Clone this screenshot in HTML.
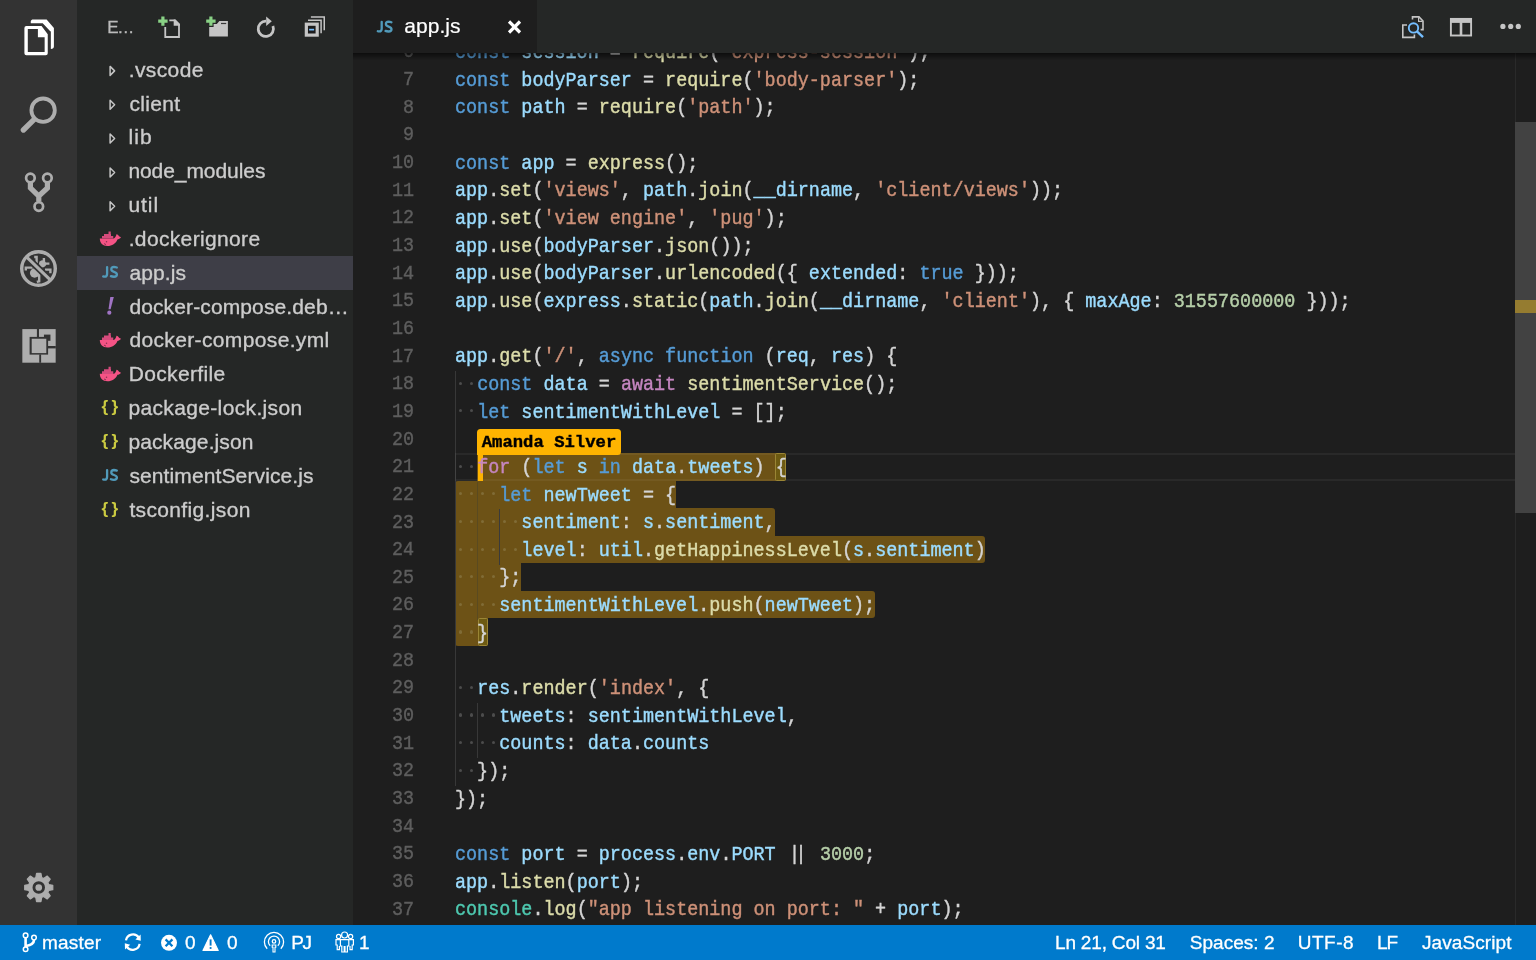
<!DOCTYPE html>
<html><head><meta charset="utf-8"><title>app.js</title>
<style>
*{margin:0;padding:0;box-sizing:border-box}
html,body{width:1536px;height:960px;overflow:hidden;background:#1e1e1e;font-family:"Liberation Sans",sans-serif}
#root{position:absolute;left:0;top:0;width:1536px;height:960px;overflow:hidden;will-change:transform}
#act{position:absolute;left:0;top:0;width:77px;height:925px;background:#333333}
#side{position:absolute;left:77px;top:0;width:276px;height:925px;background:#252726;overflow:hidden}
#tabs{position:absolute;left:353px;top:0;width:1183px;height:53px;background:#252726}
#tab{position:absolute;left:0;top:0;width:184px;height:53px;background:#1e1e1e}
#ed{position:absolute;left:0;top:0;width:1536px;height:925px;overflow:hidden}
#status{position:absolute;left:0;top:925px;width:1536px;height:35px;background:#007acc;color:#fff;font-size:19px}
#status span{position:absolute;top:0;line-height:35px;white-space:nowrap;-webkit-text-stroke:0.3px}
.row{position:absolute;left:0;width:276px;height:33.84px;line-height:33.84px;font-size:21px;color:#cccccc;white-space:nowrap}
.row span{position:absolute;left:52px;top:-0.3px;-webkit-text-stroke:0.35px}
.row svg{position:absolute}
.ln{position:absolute;left:353px;width:61px;transform:scaleY(1.1);transform-origin:0 46%;text-align:right;color:#5e5e5e;-webkit-text-stroke:0.35px;font:18.430px/27.65px "Liberation Mono",monospace;height:27.65px}
.cl{position:absolute;left:455px;color:#d4d4d4;transform:scaleY(1.06);transform-origin:0 50%;-webkit-text-stroke:0.4px;font:18.430px/27.65px "Liberation Mono",monospace;height:27.65px;white-space:pre}
.sel{position:absolute;background:#6d5216}
.lbl{position:absolute;background:#ffb400;border-radius:3.5px 3.5px 3.5px 0;color:#000;font:bold 17.25px/28px "Liberation Mono",monospace;-webkit-text-stroke:0.4px;text-align:center;white-space:pre}
svg{display:block;overflow:visible}
</style></head><body>
<div id="root">
<div id="ed">
<div class="sel" style="left:477.12px;top:453.33px;width:309.08px;height:27.67px;border-radius:0px 3px 3px 0px"></div>
<div class="sel" style="left:455.00px;top:480.80px;width:220.60px;height:27.67px;border-radius:3px 0px 0px 0px"></div>
<div class="sel" style="left:455.00px;top:508.27px;width:320.14px;height:27.67px;border-radius:0px 3px 0px 0px"></div>
<div class="sel" style="left:455.00px;top:535.74px;width:530.28px;height:27.67px;border-radius:0px 3px 3px 0px"></div>
<div class="sel" style="left:455.00px;top:563.21px;width:65.76px;height:27.67px;border-radius:0px 0px 0px 0px"></div>
<div class="sel" style="left:455.00px;top:590.68px;width:419.68px;height:27.67px;border-radius:0px 3px 3px 0px"></div>
<div class="sel" style="left:455.00px;top:618.15px;width:32.58px;height:27.67px;border-radius:0px 0px 3px 3px"></div>
<div style="position:absolute;left:455.00px;top:371.05px;width:1.2px;height:414.75px;background:#383838"></div>
<div style="position:absolute;left:477.12px;top:481.65px;width:1.2px;height:138.25px;background:#5a4a20"></div>
<div style="position:absolute;left:499.24px;top:509.30px;width:1.2px;height:55.30px;background:#3a3a3a"></div>
<div style="position:absolute;left:477.12px;top:702.85px;width:1.2px;height:55.30px;background:#383838"></div>
<div style="position:absolute;left:458.93px;top:381.62px;width:3.2px;height:3.2px;border-radius:50%;background:#4c4c4c"></div>
<div style="position:absolute;left:469.99px;top:381.62px;width:3.2px;height:3.2px;border-radius:50%;background:#4c4c4c"></div>
<div style="position:absolute;left:458.93px;top:409.27px;width:3.2px;height:3.2px;border-radius:50%;background:#4c4c4c"></div>
<div style="position:absolute;left:469.99px;top:409.27px;width:3.2px;height:3.2px;border-radius:50%;background:#4c4c4c"></div>
<div style="position:absolute;left:458.93px;top:464.57px;width:3.2px;height:3.2px;border-radius:50%;background:#4c4c4c"></div>
<div style="position:absolute;left:469.99px;top:464.57px;width:3.2px;height:3.2px;border-radius:50%;background:#4c4c4c"></div>
<div style="position:absolute;left:458.93px;top:492.22px;width:3.2px;height:3.2px;border-radius:50%;background:#806c36"></div>
<div style="position:absolute;left:469.99px;top:492.22px;width:3.2px;height:3.2px;border-radius:50%;background:#806c36"></div>
<div style="position:absolute;left:481.05px;top:492.22px;width:3.2px;height:3.2px;border-radius:50%;background:#806c36"></div>
<div style="position:absolute;left:492.11px;top:492.22px;width:3.2px;height:3.2px;border-radius:50%;background:#806c36"></div>
<div style="position:absolute;left:458.93px;top:519.88px;width:3.2px;height:3.2px;border-radius:50%;background:#806c36"></div>
<div style="position:absolute;left:469.99px;top:519.88px;width:3.2px;height:3.2px;border-radius:50%;background:#806c36"></div>
<div style="position:absolute;left:481.05px;top:519.88px;width:3.2px;height:3.2px;border-radius:50%;background:#806c36"></div>
<div style="position:absolute;left:492.11px;top:519.88px;width:3.2px;height:3.2px;border-radius:50%;background:#806c36"></div>
<div style="position:absolute;left:503.17px;top:519.88px;width:3.2px;height:3.2px;border-radius:50%;background:#806c36"></div>
<div style="position:absolute;left:514.23px;top:519.88px;width:3.2px;height:3.2px;border-radius:50%;background:#806c36"></div>
<div style="position:absolute;left:458.93px;top:547.52px;width:3.2px;height:3.2px;border-radius:50%;background:#806c36"></div>
<div style="position:absolute;left:469.99px;top:547.52px;width:3.2px;height:3.2px;border-radius:50%;background:#806c36"></div>
<div style="position:absolute;left:481.05px;top:547.52px;width:3.2px;height:3.2px;border-radius:50%;background:#806c36"></div>
<div style="position:absolute;left:492.11px;top:547.52px;width:3.2px;height:3.2px;border-radius:50%;background:#806c36"></div>
<div style="position:absolute;left:503.17px;top:547.52px;width:3.2px;height:3.2px;border-radius:50%;background:#806c36"></div>
<div style="position:absolute;left:514.23px;top:547.52px;width:3.2px;height:3.2px;border-radius:50%;background:#806c36"></div>
<div style="position:absolute;left:458.93px;top:575.18px;width:3.2px;height:3.2px;border-radius:50%;background:#806c36"></div>
<div style="position:absolute;left:469.99px;top:575.18px;width:3.2px;height:3.2px;border-radius:50%;background:#806c36"></div>
<div style="position:absolute;left:481.05px;top:575.18px;width:3.2px;height:3.2px;border-radius:50%;background:#806c36"></div>
<div style="position:absolute;left:492.11px;top:575.18px;width:3.2px;height:3.2px;border-radius:50%;background:#806c36"></div>
<div style="position:absolute;left:458.93px;top:602.83px;width:3.2px;height:3.2px;border-radius:50%;background:#806c36"></div>
<div style="position:absolute;left:469.99px;top:602.83px;width:3.2px;height:3.2px;border-radius:50%;background:#806c36"></div>
<div style="position:absolute;left:481.05px;top:602.83px;width:3.2px;height:3.2px;border-radius:50%;background:#806c36"></div>
<div style="position:absolute;left:492.11px;top:602.83px;width:3.2px;height:3.2px;border-radius:50%;background:#806c36"></div>
<div style="position:absolute;left:458.93px;top:630.48px;width:3.2px;height:3.2px;border-radius:50%;background:#806c36"></div>
<div style="position:absolute;left:469.99px;top:630.48px;width:3.2px;height:3.2px;border-radius:50%;background:#806c36"></div>
<div style="position:absolute;left:458.93px;top:685.77px;width:3.2px;height:3.2px;border-radius:50%;background:#4c4c4c"></div>
<div style="position:absolute;left:469.99px;top:685.77px;width:3.2px;height:3.2px;border-radius:50%;background:#4c4c4c"></div>
<div style="position:absolute;left:458.93px;top:713.42px;width:3.2px;height:3.2px;border-radius:50%;background:#4c4c4c"></div>
<div style="position:absolute;left:469.99px;top:713.42px;width:3.2px;height:3.2px;border-radius:50%;background:#4c4c4c"></div>
<div style="position:absolute;left:481.05px;top:713.42px;width:3.2px;height:3.2px;border-radius:50%;background:#4c4c4c"></div>
<div style="position:absolute;left:492.11px;top:713.42px;width:3.2px;height:3.2px;border-radius:50%;background:#4c4c4c"></div>
<div style="position:absolute;left:458.93px;top:741.07px;width:3.2px;height:3.2px;border-radius:50%;background:#4c4c4c"></div>
<div style="position:absolute;left:469.99px;top:741.07px;width:3.2px;height:3.2px;border-radius:50%;background:#4c4c4c"></div>
<div style="position:absolute;left:481.05px;top:741.07px;width:3.2px;height:3.2px;border-radius:50%;background:#4c4c4c"></div>
<div style="position:absolute;left:492.11px;top:741.07px;width:3.2px;height:3.2px;border-radius:50%;background:#4c4c4c"></div>
<div style="position:absolute;left:458.93px;top:768.73px;width:3.2px;height:3.2px;border-radius:50%;background:#4c4c4c"></div>
<div style="position:absolute;left:469.99px;top:768.73px;width:3.2px;height:3.2px;border-radius:50%;background:#4c4c4c"></div>
<div style="position:absolute;left:455px;top:453.3px;width:1081px;height:27.4px;border-top:2.2px solid rgba(255,255,255,0.05);border-bottom:2.2px solid rgba(255,255,255,0.05);border-left:1.2px solid rgba(255,255,255,0.05);box-sizing:border-box"></div>
<div style="position:absolute;left:775.20px;top:453.03px;width:10.90px;height:27.87px;border:1.6px solid #9a8535;border-radius:1.5px;box-sizing:border-box;background:#6d5a12"></div>
<div style="position:absolute;left:478.00px;top:617.85px;width:10.20px;height:27.87px;border:1.6px solid #9a8535;border-radius:1.5px;box-sizing:border-box;background:#6d5a12"></div>
<div style="position:absolute;left:478px;top:454.93px;width:4.8px;height:26.07px;background:#FFB400"></div>
<div class="lbl" style="left:477.2px;top:428.6px;width:143.6px;height:26.6px"><span>Amanda Silver</span></div>
<div class="ln" style="top:38.45px">6</div>
<div class="cl" style="top:40.10px"><span style="color:#569CD6">const</span> <span style="color:#9CDCFE">session</span> = <span style="color:#DCDCAA">require</span>(<span style="color:#CE9178">&#x27;express-session&#x27;</span>);</div>
<div class="ln" style="top:66.10px">7</div>
<div class="cl" style="top:67.75px"><span style="color:#569CD6">const</span> <span style="color:#9CDCFE">bodyParser</span> = <span style="color:#DCDCAA">require</span>(<span style="color:#CE9178">&#x27;body-parser&#x27;</span>);</div>
<div class="ln" style="top:93.75px">8</div>
<div class="cl" style="top:95.40px"><span style="color:#569CD6">const</span> <span style="color:#9CDCFE">path</span> = <span style="color:#DCDCAA">require</span>(<span style="color:#CE9178">&#x27;path&#x27;</span>);</div>
<div class="ln" style="top:121.40px">9</div>
<div class="ln" style="top:149.05px">10</div>
<div class="cl" style="top:150.70px"><span style="color:#569CD6">const</span> <span style="color:#9CDCFE">app</span> = <span style="color:#DCDCAA">express</span>();</div>
<div class="ln" style="top:176.70px">11</div>
<div class="cl" style="top:178.35px"><span style="color:#9CDCFE">app</span>.<span style="color:#DCDCAA">set</span>(<span style="color:#CE9178">&#x27;views&#x27;</span>, <span style="color:#9CDCFE">path</span>.<span style="color:#DCDCAA">join</span>(<span style="color:#9CDCFE">__dirname</span>, <span style="color:#CE9178">&#x27;client/views&#x27;</span>));</div>
<div class="ln" style="top:204.35px">12</div>
<div class="cl" style="top:206.00px"><span style="color:#9CDCFE">app</span>.<span style="color:#DCDCAA">set</span>(<span style="color:#CE9178">&#x27;view engine&#x27;</span>, <span style="color:#CE9178">&#x27;pug&#x27;</span>);</div>
<div class="ln" style="top:232.00px">13</div>
<div class="cl" style="top:233.65px"><span style="color:#9CDCFE">app</span>.<span style="color:#DCDCAA">use</span>(<span style="color:#9CDCFE">bodyParser</span>.<span style="color:#DCDCAA">json</span>());</div>
<div class="ln" style="top:259.65px">14</div>
<div class="cl" style="top:261.30px"><span style="color:#9CDCFE">app</span>.<span style="color:#DCDCAA">use</span>(<span style="color:#9CDCFE">bodyParser</span>.<span style="color:#DCDCAA">urlencoded</span>({ <span style="color:#9CDCFE">extended</span>: <span style="color:#569CD6">true</span> }));</div>
<div class="ln" style="top:287.30px">15</div>
<div class="cl" style="top:288.95px"><span style="color:#9CDCFE">app</span>.<span style="color:#DCDCAA">use</span>(<span style="color:#9CDCFE">express</span>.<span style="color:#DCDCAA">static</span>(<span style="color:#9CDCFE">path</span>.<span style="color:#DCDCAA">join</span>(<span style="color:#9CDCFE">__dirname</span>, <span style="color:#CE9178">&#x27;client&#x27;</span>), { <span style="color:#9CDCFE">maxAge</span>: <span style="color:#B5CEA8">31557600000</span> }));</div>
<div class="ln" style="top:314.95px">16</div>
<div class="ln" style="top:342.60px">17</div>
<div class="cl" style="top:344.25px"><span style="color:#9CDCFE">app</span>.<span style="color:#DCDCAA">get</span>(<span style="color:#CE9178">&#x27;/&#x27;</span>, <span style="color:#569CD6">async</span> <span style="color:#569CD6">function</span> (<span style="color:#9CDCFE">req</span>, <span style="color:#9CDCFE">res</span>) {</div>
<div class="ln" style="top:370.25px">18</div>
<div class="cl" style="top:371.90px">  <span style="color:#569CD6">const</span> <span style="color:#9CDCFE">data</span> = <span style="color:#C586C0">await</span> <span style="color:#DCDCAA">sentimentService</span>();</div>
<div class="ln" style="top:397.90px">19</div>
<div class="cl" style="top:399.55px">  <span style="color:#569CD6">let</span> <span style="color:#9CDCFE">sentimentWithLevel</span> = [];</div>
<div class="ln" style="top:425.55px">20</div>
<div class="ln" style="top:453.20px">21</div>
<div class="cl" style="top:454.85px">  <span style="color:#C586C0">for</span> (<span style="color:#569CD6">let</span> <span style="color:#9CDCFE">s</span> <span style="color:#569CD6">in</span> <span style="color:#9CDCFE">data</span>.<span style="color:#9CDCFE">tweets</span>) {</div>
<div class="ln" style="top:480.85px">22</div>
<div class="cl" style="top:482.50px">    <span style="color:#569CD6">let</span> <span style="color:#9CDCFE">newTweet</span> = {</div>
<div class="ln" style="top:508.50px">23</div>
<div class="cl" style="top:510.15px">      <span style="color:#9CDCFE">sentiment</span>: <span style="color:#9CDCFE">s</span>.<span style="color:#9CDCFE">sentiment</span>,</div>
<div class="ln" style="top:536.15px">24</div>
<div class="cl" style="top:537.80px">      <span style="color:#9CDCFE">level</span>: <span style="color:#9CDCFE">util</span>.<span style="color:#DCDCAA">getHappinessLevel</span>(<span style="color:#9CDCFE">s</span>.<span style="color:#9CDCFE">sentiment</span>)</div>
<div class="ln" style="top:563.80px">25</div>
<div class="cl" style="top:565.45px">    };</div>
<div class="ln" style="top:591.45px">26</div>
<div class="cl" style="top:593.10px">    <span style="color:#9CDCFE">sentimentWithLevel</span>.<span style="color:#DCDCAA">push</span>(<span style="color:#9CDCFE">newTweet</span>);</div>
<div class="ln" style="top:619.10px">27</div>
<div class="cl" style="top:620.75px">  }</div>
<div class="ln" style="top:646.75px">28</div>
<div class="ln" style="top:674.40px">29</div>
<div class="cl" style="top:676.05px">  <span style="color:#9CDCFE">res</span>.<span style="color:#DCDCAA">render</span>(<span style="color:#CE9178">&#x27;index&#x27;</span>, {</div>
<div class="ln" style="top:702.05px">30</div>
<div class="cl" style="top:703.70px">    <span style="color:#9CDCFE">tweets</span>: <span style="color:#9CDCFE">sentimentWithLevel</span>,</div>
<div class="ln" style="top:729.70px">31</div>
<div class="cl" style="top:731.35px">    <span style="color:#9CDCFE">counts</span>: <span style="color:#9CDCFE">data</span>.<span style="color:#9CDCFE">counts</span></div>
<div class="ln" style="top:757.35px">32</div>
<div class="cl" style="top:759.00px">  });</div>
<div class="ln" style="top:785.00px">33</div>
<div class="cl" style="top:786.65px">});</div>
<div class="ln" style="top:812.65px">34</div>
<div class="ln" style="top:840.30px">35</div>
<div class="cl" style="top:841.95px"><span style="color:#569CD6">const</span> <span style="color:#9CDCFE">port</span> = <span style="color:#9CDCFE">process</span>.<span style="color:#9CDCFE">env</span>.<span style="color:#9CDCFE">PORT</span> <span style="letter-spacing:-4.36px;margin-left:2.18px;margin-right:6.54px">||</span> <span style="color:#B5CEA8">3000</span>;</div>
<div class="ln" style="top:867.95px">36</div>
<div class="cl" style="top:869.60px"><span style="color:#9CDCFE">app</span>.<span style="color:#DCDCAA">listen</span>(<span style="color:#9CDCFE">port</span>);</div>
<div class="ln" style="top:895.60px">37</div>
<div class="cl" style="top:897.25px"><span style="color:#4EC9B0">console</span>.<span style="color:#DCDCAA">log</span>(<span style="color:#CE9178">&quot;app listening on port: &quot;</span> + <span style="color:#9CDCFE">port</span>);</div>
</div>
<div style="position:absolute;left:1514.5px;top:53px;width:1px;height:872px;background:#2a2a2a"></div>
<div style="position:absolute;left:1514.8px;top:122.4px;width:21.2px;height:390.2px;background:#424242"></div>
<div style="position:absolute;left:1514.8px;top:299.8px;width:21.2px;height:12.9px;background:#957c30"></div>
<div id="tabs"><div id="tab"></div></div>
<div style="position:absolute;left:353px;top:53px;width:1183px;height:7px;background:linear-gradient(rgba(0,0,0,0.55),rgba(0,0,0,0))"></div>
<div style="position:absolute;left:404.2px;top:11.1px;font-size:21px;line-height:30px;color:#fff;white-space:nowrap;-webkit-text-stroke:0.2px;letter-spacing:0.052px" id="tabtxt">app.js</div>
<div id="act"></div>
<div id="side">
<div style="position:absolute;left:30.30px;top:15px;font-size:17px;line-height:26px;color:#bbbbbb;-webkit-text-stroke:0.3px;letter-spacing:-1.339px;white-space:nowrap" id="hdr">E…</div>
<div class="row" style="top:53.00px"><span style="left:51.70px;letter-spacing:0.385px">.vscode</span></div>
<div class="row" style="top:86.84px"><span style="left:52.40px;letter-spacing:0.322px">client</span></div>
<div class="row" style="top:120.68px"><span style="left:51.40px;letter-spacing:1.134px">lib</span></div>
<div class="row" style="top:154.52px"><span style="left:51.40px;letter-spacing:-0.07px">node_modules</span></div>
<div class="row" style="top:188.36px"><span style="left:51.40px;letter-spacing:0.974px">util</span></div>
<div class="row" style="top:222.20px"><span style="left:51.70px;letter-spacing:0.345px">.dockerignore</span></div>
<div class="row" style="top:256.04px;background:#3e3e47"><span style="left:52.40px;letter-spacing:0.112px">app.js</span></div>
<div class="row" style="top:289.88px"><span style="left:52.40px;letter-spacing:0.122px">docker-compose.deb…</span></div>
<div class="row" style="top:323.72px"><span style="left:52.40px;letter-spacing:0.361px">docker-compose.yml</span></div>
<div class="row" style="top:357.56px"><span style="left:51.70px;letter-spacing:0.346px">Dockerfile</span></div>
<div class="row" style="top:391.40px"><span style="left:51.40px;letter-spacing:0.355px">package-lock.json</span></div>
<div class="row" style="top:425.24px"><span style="left:51.40px;letter-spacing:0.12px">package.json</span></div>
<div class="row" style="top:459.08px"><span style="left:52.40px;letter-spacing:0.118px">sentimentService.js</span></div>
<div class="row" style="top:492.92px"><span style="left:52.40px;letter-spacing:0.354px">tsconfig.json</span></div>
</div>
<div id="status">
<span style="left:42px;letter-spacing:0.212px">master</span>
<span style="left:184.9px;letter-spacing:0px">0</span>
<span style="left:227.1px;letter-spacing:0px">0</span>
<span style="left:291.2px;letter-spacing:-1.473px">PJ</span>
<span style="left:359px;letter-spacing:0px">1</span>
<span style="left:1055px;letter-spacing:-0.18px">Ln 21, Col 31</span>
<span style="left:1189.7px;letter-spacing:0.046px">Spaces: 2</span>
<span style="left:1297.7px;letter-spacing:0.535px">UTF-8</span>
<span style="left:1377px;letter-spacing:-1.067px">LF</span>
<span style="left:1421.9px;letter-spacing:0.098px">JavaScript</span>
</div>
<svg id="icons" width="1536" height="960" viewBox="0 0 1536 960" style="position:absolute;left:0;top:0">
<path fill="#fff" fill-rule="evenodd" d="M26.4 26 H41.56 L47.75 34.2 V53.3 Q47.75 55.3 45.75 55.3 H26.4 Q24.4 55.3 24.4 53.3 V28 Q24.4 26 26.4 26 Z M27.8 29.1 V51.9 H44.65 V37.3 H37.9 V29.1 Z"/><path fill="#fff" d="M32.4 19.56 H46.6 L53.9 28 V46.4 Q53.9 48.6 50.84 49 V31.4 L50 31.1 L42.7 23.2 H30.8 Q30.3 20 32.4 19.56 Z"/>
<g fill="none" stroke="#adadad" stroke-linecap="round"><circle cx="43.1" cy="110.2" r="11.7" stroke-width="3.8"/><path d="M34.2 119.4 L23.4 130" stroke-width="5.4"/></g>
<g fill="none" stroke="#adadad"><circle cx="30.4" cy="178" r="4.3" stroke-width="2.7"/><circle cx="47.4" cy="178" r="4.3" stroke-width="2.7"/><circle cx="38.8" cy="206.5" r="4.3" stroke-width="2.7"/><path d="M30.4 183 V188 L38.8 196 V201.5 M47.4 183 V188 L38.8 196" stroke-width="5.2" stroke-linejoin="miter"/></g>
<g fill="#adadad" stroke="#adadad" stroke-width="2.4" stroke-linecap="butt" stroke-linejoin="miter"><circle cx="34.6" cy="273" r="4.7" stroke="none"/><ellipse cx="42.6" cy="263.8" rx="3.3" ry="3.6" transform="rotate(-45 42.6 263.8)" stroke="none"/><path d="M25.8 270.4 V267.6 H32.6 M39.2 274 V281.2 L36.8 281.8 M34.2 257 H36.6 V263 M43.9 258 V262 M45 263.6 H49.4 M45 269.6 H50.4 V273.2" fill="none"/></g>
<path d="M28 258.3 L49 278.6" stroke="#333" stroke-width="6.6" fill="none"/>
<g fill="none" stroke="#adadad"><circle cx="38.5" cy="268.5" r="16.8" stroke-width="3.4"/><path d="M27 257.3 L50 279.6" stroke-width="3.1"/></g>
<rect x="22.33" y="329.1" width="33.34" height="33.6" fill="#adadad"/><g fill="#333"><rect x="36.9" y="329" width="2.1" height="8.4"/><rect x="39.26" y="354.4" width="1.85" height="8.4"/><rect x="48" y="346" width="7.8" height="2.4"/><rect x="43.95" y="334.6" width="6.5" height="6.2"/><rect x="29.6" y="336.9" width="18.5" height="17.7"/></g><rect x="31.7" y="338.75" width="14.6" height="14.35" fill="#adadad"/>
<path d="M35.80 877.63 L36.56 873.47 L40.94 873.47 L41.70 877.63 L43.65 878.44 L47.12 876.03 L50.22 879.13 L47.81 882.60 L48.62 884.55 L52.78 885.31 L52.78 889.69 L48.62 890.45 L47.81 892.40 L50.22 895.87 L47.12 898.97 L43.65 896.56 L41.70 897.37 L40.94 901.53 L36.56 901.53 L35.80 897.37 L33.85 896.56 L30.38 898.97 L27.28 895.87 L29.69 892.40 L28.88 890.45 L24.72 889.69 L24.72 885.31 L28.88 884.55 L29.69 882.60 L27.28 879.13 L30.38 876.03 L33.85 878.44 Z" fill="#adadad" stroke="#adadad" stroke-width="1.2" stroke-linejoin="round"/>
<circle cx="38.75" cy="887.5" r="4.8" fill="none" stroke="#333" stroke-width="2.9"/>
<path d="M169.3 20.3 H175 L179 24.4 V37 H165.25 V27" fill="none" stroke="#c5c5c5" stroke-width="1.8"/><path d="M173.7 19.4 H175.4 L179.9 23.9 V25.7 H173.7 Z" fill="#c5c5c5"/><path d="M162.9 16.4 V25.7 M158.2 21.05 H167.6" stroke="#89d185" stroke-width="3.2"/>
<path d="M209.2 36.4 V27 H213.6 V24.1 H216.8 L219.4 20.9 H227.9 V36.4 Z" fill="#c5c5c5"/><path d="M221 23.5 H226.2" stroke="#3a3a3a" stroke-width="1.2"/><path d="M210.9 16.4 V25.7 M206.2 21.05 H215.6" stroke="#89d185" stroke-width="3.2"/>
<path d="M266 21.2 A7.6 7.6 0 1 0 272.9 26" fill="none" stroke="#c5c5c5" stroke-width="2.8"/><path d="M266.2 16.4 L271.8 21.3 L266.2 26 Z" fill="#c5c5c5"/>
<g fill="none" stroke="#c5c5c5"><path d="M310.9 16.95 H324.25 V30.3" stroke-width="1.5"/><path d="M308 20.15 H321.1 V33.2" stroke-width="1.5"/><rect x="306.35" y="24.2" width="10.85" height="10.9" stroke-width="3.2" fill="#1c1c1c"/></g><path d="M309.1 29.65 H314.1" stroke="#75beff" stroke-width="1.7"/>
<path d="M110.1 66.40 L114.6 70.90 L110.1 75.40 Z" fill="none" stroke="#c5c5c5" stroke-width="1.5" stroke-linejoin="round"/>
<path d="M110.1 100.24 L114.6 104.74 L110.1 109.24 Z" fill="none" stroke="#c5c5c5" stroke-width="1.5" stroke-linejoin="round"/>
<path d="M110.1 134.08 L114.6 138.58 L110.1 143.08 Z" fill="none" stroke="#c5c5c5" stroke-width="1.5" stroke-linejoin="round"/>
<path d="M110.1 167.92 L114.6 172.42 L110.1 176.92 Z" fill="none" stroke="#c5c5c5" stroke-width="1.5" stroke-linejoin="round"/>
<path d="M110.1 201.76 L114.6 206.26 L110.1 210.76 Z" fill="none" stroke="#c5c5c5" stroke-width="1.5" stroke-linejoin="round"/>
<g transform="translate(0 0.00)"><path fill="#f55385" d="M99.8 238.5 H113.6 C115 238.3 116 236.5 116.5 234.3 C117.6 234.2 118.5 235.4 119 236.3 L121 237.3 C120 238.8 118.6 239.3 117.4 239.5 C116 243.6 112 246 107.5 246 C102.6 246 99.8 243 99.8 238.5 Z"/><path fill="#d64b7c" d="M102 238.6 V236 H104 V234 H108.5 V231.5 H110.75 V234 H111 V236 H113.25 V238.6 Z"/><circle cx="106.5" cy="241.8" r="0.75" fill="#8a3350"/><path d="M104 243.6 L106 244.6" stroke="#8a3350" stroke-width="1"/></g>
<g transform="translate(0 101.52)"><path fill="#f55385" d="M99.8 238.5 H113.6 C115 238.3 116 236.5 116.5 234.3 C117.6 234.2 118.5 235.4 119 236.3 L121 237.3 C120 238.8 118.6 239.3 117.4 239.5 C116 243.6 112 246 107.5 246 C102.6 246 99.8 243 99.8 238.5 Z"/><path fill="#d64b7c" d="M102 238.6 V236 H104 V234 H108.5 V231.5 H110.75 V234 H111 V236 H113.25 V238.6 Z"/><circle cx="106.5" cy="241.8" r="0.75" fill="#8a3350"/><path d="M104 243.6 L106 244.6" stroke="#8a3350" stroke-width="1"/></g>
<g transform="translate(0 135.36)"><path fill="#f55385" d="M99.8 238.5 H113.6 C115 238.3 116 236.5 116.5 234.3 C117.6 234.2 118.5 235.4 119 236.3 L121 237.3 C120 238.8 118.6 239.3 117.4 239.5 C116 243.6 112 246 107.5 246 C102.6 246 99.8 243 99.8 238.5 Z"/><path fill="#d64b7c" d="M102 238.6 V236 H104 V234 H108.5 V231.5 H110.75 V234 H111 V236 H113.25 V238.6 Z"/><circle cx="106.5" cy="241.8" r="0.75" fill="#8a3350"/><path d="M104 243.6 L106 244.6" stroke="#8a3350" stroke-width="1"/></g>
<g transform="translate(102.30 265.84) scale(1)" fill="none" stroke="#519aba" stroke-width="2.3" stroke-linecap="round"><path d="M4.8 1.2 V7.8 Q4.8 10.8 2.4 10.8 Q1.4 10.8 0.9 10.6"/><path d="M14.5 1.7 Q13 1.1 11.7 1.1 Q9 1.2 9 3.5 Q9 5.2 11.7 6.1 Q14.6 7.1 14.6 8.7 Q14.6 10.9 11.7 10.9 Q9.8 10.9 8.6 10.3"/></g>
<g transform="translate(102.30 468.88) scale(1)" fill="none" stroke="#519aba" stroke-width="2.3" stroke-linecap="round"><path d="M4.8 1.2 V7.8 Q4.8 10.8 2.4 10.8 Q1.4 10.8 0.9 10.6"/><path d="M14.5 1.7 Q13 1.1 11.7 1.1 Q9 1.2 9 3.5 Q9 5.2 11.7 6.1 Q14.6 7.1 14.6 8.7 Q14.6 10.9 11.7 10.9 Q9.8 10.9 8.6 10.3"/></g>
<g transform="translate(0 0.00)" fill="#a074c4"><path d="M110.3 297 H113.8 L110.6 309.2 H108.5 Z"/><circle cx="109.3" cy="312.7" r="2.1"/></g>
<text x="101.6" y="412.30" font-family="Liberation Sans" font-weight="bold" font-size="17.2" fill="#cbcb41">{</text><text x="111.6" y="412.30" font-family="Liberation Sans" font-weight="bold" font-size="17.2" fill="#cbcb41">}</text>
<text x="101.6" y="446.14" font-family="Liberation Sans" font-weight="bold" font-size="17.2" fill="#cbcb41">{</text><text x="111.6" y="446.14" font-family="Liberation Sans" font-weight="bold" font-size="17.2" fill="#cbcb41">}</text>
<text x="101.6" y="513.82" font-family="Liberation Sans" font-weight="bold" font-size="17.2" fill="#cbcb41">{</text><text x="111.6" y="513.82" font-family="Liberation Sans" font-weight="bold" font-size="17.2" fill="#cbcb41">}</text>
<g transform="translate(376.90 20.60) scale(1)" fill="none" stroke="#519aba" stroke-width="2.3" stroke-linecap="round"><path d="M4.8 1.2 V7.8 Q4.8 10.8 2.4 10.8 Q1.4 10.8 0.9 10.6"/><path d="M14.5 1.7 Q13 1.1 11.7 1.1 Q9 1.2 9 3.5 Q9 5.2 11.7 6.1 Q14.6 7.1 14.6 8.7 Q14.6 10.9 11.7 10.9 Q9.8 10.9 8.6 10.3"/></g>
<path d="M509 21.5 L520 32.5 M520 21.5 L509 32.5" stroke="#fff" stroke-width="3.2"/>
<g fill="none" stroke="#c5c5c5" stroke-width="1.6"><path d="M1412.5 19.5 V16.9 H1419 L1423 21 V29.6 H1420.6"/><path d="M1418.6 17.2 V21.4 H1422.6" stroke-width="1.2"/><path d="M1407 25 H1402.8 V37.4 H1414.4 V34.6"/></g><circle cx="1413.5" cy="27.9" r="4.7" fill="#252726" stroke="#75beff" stroke-width="1.9"/><path d="M1417 31.4 L1423 37.2" stroke="#75beff" stroke-width="2.3"/>
<rect x="1450.9" y="18.9" width="20.2" height="16.6" fill="none" stroke="#c5c5c5" stroke-width="1.9"/><rect x="1450" y="18" width="22" height="4.9" fill="#c5c5c5"/><path d="M1461 22 V36" stroke="#c5c5c5" stroke-width="2.6"/>
<circle cx="1502.9" cy="26.4" r="2.6" fill="#c5c5c5"/>
<circle cx="1510.7" cy="26.4" r="2.6" fill="#c5c5c5"/>
<circle cx="1518.3" cy="26.4" r="2.6" fill="#c5c5c5"/>
<g fill="none" stroke="#fff" stroke-width="1.5"><circle cx="25.6" cy="935.4" r="2.3"/><circle cx="25.6" cy="949.3" r="2.3"/><circle cx="34" cy="937.6" r="2.3"/><path d="M25.6 937.8 V947 M34 940 Q34 944.6 26 946" stroke-width="2.6"/></g>
<g fill="none" stroke="#fff" stroke-width="2.2"><path d="M126 940.4 A7 7 0 0 1 138.8 937.6"/><path d="M139.6 943.8 A7 7 0 0 1 126.8 946.6"/></g><path d="M135.4 939.4 L140.6 934.6 L140.8 940.8 Z M130.2 944.8 L125 949.6 L124.8 943.2 Z" fill="#fff"/>
<circle cx="169" cy="942.8" r="8" fill="#fff"/><path d="M165.6 939.4 L172.4 946.2 M172.4 939.4 L165.6 946.2" stroke="#007acc" stroke-width="2.3"/>
<path d="M210.6 934.8 L218.2 950.4 H203 Z" fill="#fff" stroke="#fff" stroke-width="1.2" stroke-linejoin="round"/><path d="M210.6 939.4 V945.6" stroke="#007acc" stroke-width="1.9"/><circle cx="210.6" cy="948" r="1.1" fill="#007acc"/>
<g fill="none" stroke="#fff" stroke-width="1.3"><path d="M267.2 948.8 A9.6 9.6 0 1 1 280.8 948.8"/><path d="M270.2 945.8 A5.6 5.6 0 1 1 277.8 945.8"/><circle cx="274" cy="941.4" r="1.7"/><path d="M272.2 945 H275.8 V947.2 H275 V952 H273 V947.2 H272.2 Z" stroke-width="1.1"/></g>
<g fill="none" stroke="#fff" stroke-width="1.2"><circle cx="344.6" cy="935" r="3"/><circle cx="338.6" cy="936.4" r="2.1"/><circle cx="350.6" cy="936.4" r="2.1"/><path d="M340.4 939.6 H348.8 V946 H347.4 V952 H345 V946.6 H344.2 V952 H341.8 V946 H340.4 Z"/><path d="M340 939.6 H336 V945 H337.2 V949.6 H339.4 V946"/><path d="M349.2 939.6 H353.4 V945 H352.2 V949.6 H350 V946"/></g>
</svg>
</div>
</body></html>
